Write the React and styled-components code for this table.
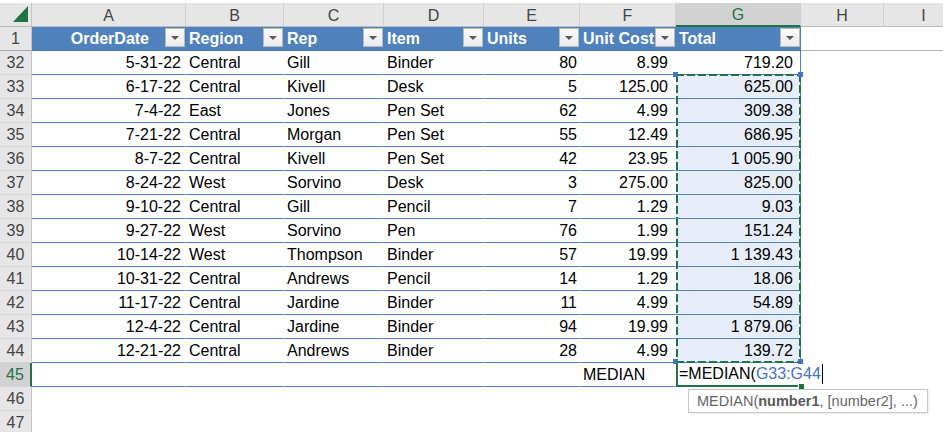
import React from "react";
import styled, { createGlobalStyle } from "styled-components";

const GREEN = "#217346";
const BLUE = "#4f81bd";
const REF = "#4472c4";

const GlobalStyle = createGlobalStyle`
  html, body {
    margin: 0;
    padding: 0;
    background: #fff;
    overflow: hidden;
  }
  body {
    font-family: "Liberation Sans", Arial, sans-serif;
  }
`;

const columns = ["A", "B", "C", "D", "E", "F", "G", "H", "I"];

const headers = [
  { label: "OrderDate", right: true },
  { label: "Region" },
  { label: "Rep" },
  { label: "Item" },
  { label: "Units" },
  { label: "Unit Cost" },
  { label: "Total" },
];

// alignment + inner padding for each table field
const fields = [
  { align: "right", pad: 4 },
  { align: "left", pad: 3 },
  { align: "left", pad: 3 },
  { align: "left", pad: 3 },
  { align: "right", pad: 2 },
  { align: "right", pad: 7 },
  { align: "right", pad: 7 },
];

const rows = [
  [32, "5-31-22", "Central", "Gill", "Binder", "80", "8.99", "719.20"],
  [33, "6-17-22", "Central", "Kivell", "Desk", "5", "125.00", "625.00"],
  [34, "7-4-22", "East", "Jones", "Pen Set", "62", "4.99", "309.38"],
  [35, "7-21-22", "Central", "Morgan", "Pen Set", "55", "12.49", "686.95"],
  [36, "8-7-22", "Central", "Kivell", "Pen Set", "42", "23.95", "1 005.90"],
  [37, "8-24-22", "West", "Sorvino", "Desk", "3", "275.00", "825.00"],
  [38, "9-10-22", "Central", "Gill", "Pencil", "7", "1.29", "9.03"],
  [39, "9-27-22", "West", "Sorvino", "Pen", "76", "1.99", "151.24"],
  [40, "10-14-22", "West", "Thompson", "Binder", "57", "19.99", "1 139.43"],
  [41, "10-31-22", "Central", "Andrews", "Pencil", "14", "1.29", "18.06"],
  [42, "11-17-22", "Central", "Jardine", "Binder", "11", "4.99", "54.89"],
  [43, "12-4-22", "Central", "Jardine", "Binder", "94", "19.99", "1 879.06"],
  [44, "12-21-22", "Central", "Andrews", "Binder", "28", "4.99", "139.72"],
];

const Sheet = styled.div`
  display: grid;
  grid-template-columns: 32px 154px 98px 100px 100px 96px 96px 125px 83px 80px;
  grid-auto-rows: 24px;
  padding-top: 3px;
  width: max-content;
  font-size: 16px;
  color: #000;
`;

const Corner = styled.div`
  box-sizing: border-box;
  background: #e6e6e6;
  border-right: 1px solid #c4c4c4;
  border-bottom: 1px solid #bdbdbd;
  svg {
    display: block;
  }
`;

const ColHead = styled.div`
  box-sizing: border-box;
  display: flex;
  align-items: center;
  justify-content: center;
  padding-top: 2px;
  background: ${(p) => (p.$active ? "#d2d2d2" : "#e6e6e6")};
  color: ${(p) => (p.$active ? GREEN : "#444")};
  border-right: 1px solid #d0d0d0;
  border-bottom: ${(p) => (p.$active ? `2px solid ${GREEN}` : "1px solid #bdbdbd")};
`;

const RowHead = styled.div`
  box-sizing: border-box;
  display: flex;
  align-items: center;
  justify-content: center;
  background: ${(p) => (p.$active ? "#d2d2d2" : "#e6e6e6")};
  color: ${(p) => (p.$active ? GREEN : "#444")};
  border-right: ${(p) => (p.$active ? `2px solid ${GREEN}` : "1px solid #c4c4c4")};
  border-bottom: 1px solid ${(p) => (p.$freeze ? "#a8a8a8" : "#d6d6d6")};
`;

const HeaderCell = styled.div`
  box-sizing: border-box;
  display: flex;
  align-items: center;
  min-width: 0;
  padding-left: 3px;
  background: ${BLUE};
  color: #fff;
  font-weight: bold;
  border-bottom: 1px solid #4a78b0;
`;

const HeaderText = styled.span`
  flex: 1;
  min-width: 0;
  overflow: hidden;
  white-space: nowrap;
  text-align: ${(p) => (p.$right ? "right" : "left")};
  padding-right: ${(p) => (p.$right ? 16 : 0)}px;
`;

const FilterButton = styled.span`
  box-sizing: border-box;
  flex: none;
  align-self: flex-start;
  width: 20px;
  height: 19px;
  margin: 1px 1px 0 0;
  display: flex;
  align-items: center;
  justify-content: center;
  border: 1px solid #b9b9b9;
  background: linear-gradient(#fbfbfb, #ebebeb);
  &::after {
    content: "";
    border-left: 4px solid transparent;
    border-right: 4px solid transparent;
    border-top: 4px solid #5a5a5a;
  }
`;

const Cell = styled.div`
  box-sizing: border-box;
  display: flex;
  align-items: center;
  justify-content: ${(p) => (p.$align === "right" ? "flex-end" : "flex-start")};
  padding-left: ${(p) => (p.$align === "right" ? 0 : p.$pad)}px;
  padding-right: ${(p) => (p.$align === "right" ? p.$pad : 0)}px;
  white-space: nowrap;
  position: ${(p) => (p.$anchor ? "relative" : "static")};
  background: ${(p) => (p.$marked ? "#e7eef9" : "transparent")};
  border-bottom: 1px solid ${(p) => (p.$ruled ? BLUE : "transparent")};
  border-right: 1px solid ${(p) => (p.$edge ? BLUE : "transparent")};
`;

const Blank = styled.div`
  box-sizing: border-box;
  border-bottom: 1px solid ${(p) => (p.$freeze ? "#b4b4b4" : "transparent")};
`;

const Marquee = styled.div`
  position: absolute;
  top: -1px;
  left: 0;
  right: -1px;
  height: 289px;
  z-index: 2;
  pointer-events: none;
  background:
    repeating-linear-gradient(90deg, ${GREEN} 0 8px, transparent 8px 11px) left top / 100% 2px no-repeat,
    repeating-linear-gradient(90deg, ${GREEN} 0 8px, transparent 8px 11px) left bottom / 100% 2px no-repeat,
    repeating-linear-gradient(180deg, ${GREEN} 0 8px, transparent 8px 11px) left top / 2px 100% no-repeat,
    repeating-linear-gradient(180deg, ${GREEN} 0 8px, transparent 8px 11px) right top / 2px 100% no-repeat;
`;

const Handle = styled.span`
  position: absolute;
  width: 5px;
  height: 5px;
  background: ${REF};
  ${(p) => (p.$top ? "top: -2px;" : "bottom: -1px;")}
  ${(p) => (p.$left ? "left: -3px;" : "right: -2px;")}
`;

const ActiveCell = styled.div`
  box-sizing: border-box;
  position: relative;
  z-index: 3;
  display: flex;
  align-items: center;
  padding-left: 1px;
  white-space: nowrap;
  border-left: 2px solid ${GREEN};
  border-bottom: 2px solid ${GREEN};
`;

const RefText = styled.span`
  color: ${REF};
`;

const Caret = styled.span`
  display: inline-block;
  width: 0;
  height: 20px;
  margin-left: 1px;
  border-left: 1px solid #000;
`;

const FillHandle = styled.span`
  position: absolute;
  right: -3px;
  bottom: -4px;
  width: 5px;
  height: 5px;
  background: ${GREEN};
  border: 1px solid #fff;
  border-width: 1px 0 0 1px;
`;

const Tip = styled.div`
  position: absolute;
  left: 10px;
  top: calc(100% + 4px);
  box-sizing: border-box;
  height: 24px;
  padding: 0 9px 0 8px;
  display: flex;
  align-items: center;
  background: #fff;
  border: 1px solid #c6c6c6;
  box-shadow: 1px 1px 2px rgba(0, 0, 0, 0.08);
  color: #666;
  font-size: 14.5px;
  white-space: nowrap;
  b {
    color: #595959;
  }
`;

function BlankRow({ num }) {
  return (
    <>
      <RowHead>{num}</RowHead>
      {columns.map((c) => (
        <Blank key={c} />
      ))}
    </>
  );
}

export default function App() {
  return (
    <>
      <GlobalStyle />
      <Sheet>
        <Corner>
          <svg width="31" height="23" viewBox="0 0 31 23">
            <polygon points="13,19 28,19 28,3" fill={GREEN} />
          </svg>
        </Corner>
        {columns.map((c) => (
          <ColHead key={c} $active={c === "G"}>
            {c}
          </ColHead>
        ))}

        <RowHead $freeze>1</RowHead>
        {headers.map((h) => (
          <HeaderCell key={h.label}>
            <HeaderText $right={h.right}>{h.label}</HeaderText>
            <FilterButton />
          </HeaderCell>
        ))}
        <Blank $freeze />
        <Blank $freeze />

        {rows.map(([num, ...vals]) => (
          <React.Fragment key={num}>
            <RowHead>{num}</RowHead>
            {vals.map((v, i) => {
              const inTotal = i === 6;
              const anchor = inTotal && num === 33;
              return (
                <Cell
                  key={i}
                  $align={fields[i].align}
                  $pad={fields[i].pad}
                  $ruled
                  $edge={inTotal}
                  $marked={inTotal && num >= 33}
                  $anchor={anchor}
                >
                  {v}
                  {anchor && (
                    <Marquee>
                      <Handle $top $left />
                      <Handle $top />
                      <Handle $left />
                      <Handle />
                    </Marquee>
                  )}
                </Cell>
              );
            })}
            <Blank />
            <Blank />
          </React.Fragment>
        ))}

        <RowHead $active>45</RowHead>
        {[0, 1, 2, 3, 4].map((i) => (
          <Cell key={i} $ruled />
        ))}
        <Cell $align="left" $pad={3} $ruled>
          MEDIAN
        </Cell>
        <ActiveCell>
          =MEDIAN(<RefText>G33:G44</RefText>
          <Caret />
          <FillHandle />
          <Tip>
            MEDIAN(<b>number1</b>, [number2], ...)
          </Tip>
        </ActiveCell>
        <Blank />
        <Blank />

        <BlankRow num={46} />
        <BlankRow num={47} />
      </Sheet>
    </>
  );
}
